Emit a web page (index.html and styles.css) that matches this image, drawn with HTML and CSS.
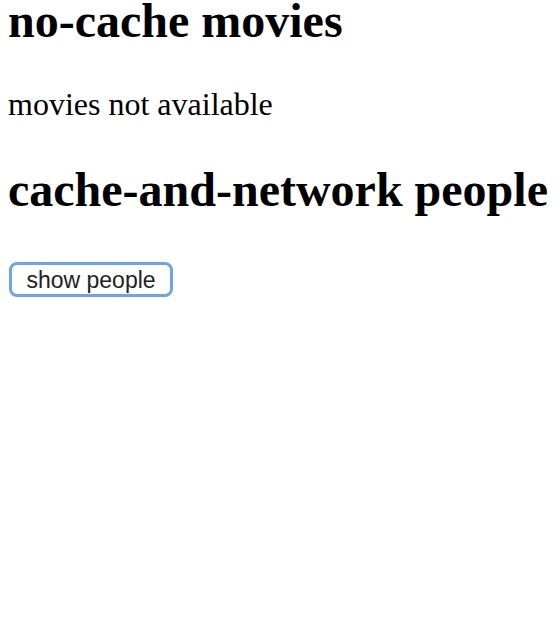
FILE: index.html
```html
<!DOCTYPE html>
<html lang="en">
<head>
    <meta charset="UTF-8">
    <meta name="viewport" content="width=device-width, initial-scale=1.0">
    <title>Apollo fetch policies</title>
    <link rel="stylesheet" href="styles.css">
</head>
<body>
    <div class="section">
        <h1 class="title">no-cache movies</h1>
        <p class="note">movies not available</p>
    </div>

    <div class="section">
        <h1 class="title">cache-and-network people</h1>
        <button class="show-btn">show people</button>
    </div>
</body>
</html>
```

FILE: styles.css
```css
body {
    margin: 0;
    padding: 0 8px;
    font-family: "Liberation Serif", serif;
    color: #000;
    background: #fff;
}
.title {
    font-size: 48px;
    font-weight: bold;
    line-height: 42px;
    margin: 0 0 44px;
}
.note {
    font-size: 32px;
    line-height: 36px;
    margin: 0 0 47px;
}
.title + .show-btn {
    margin-top: 7px;
}
.show-btn {
    box-sizing: border-box;
    width: 164px;
    height: 35px;
    padding: 2px 0 0;
    margin-left: 1px;
    background: #fff;
    color: #222;
    border: 3px solid #6ea3ea;
    border-radius: 8px;
    font-family: "Liberation Sans", Arial, sans-serif;
    font-size: 23px;
    line-height: 27px;
    cursor: pointer;
}
```
